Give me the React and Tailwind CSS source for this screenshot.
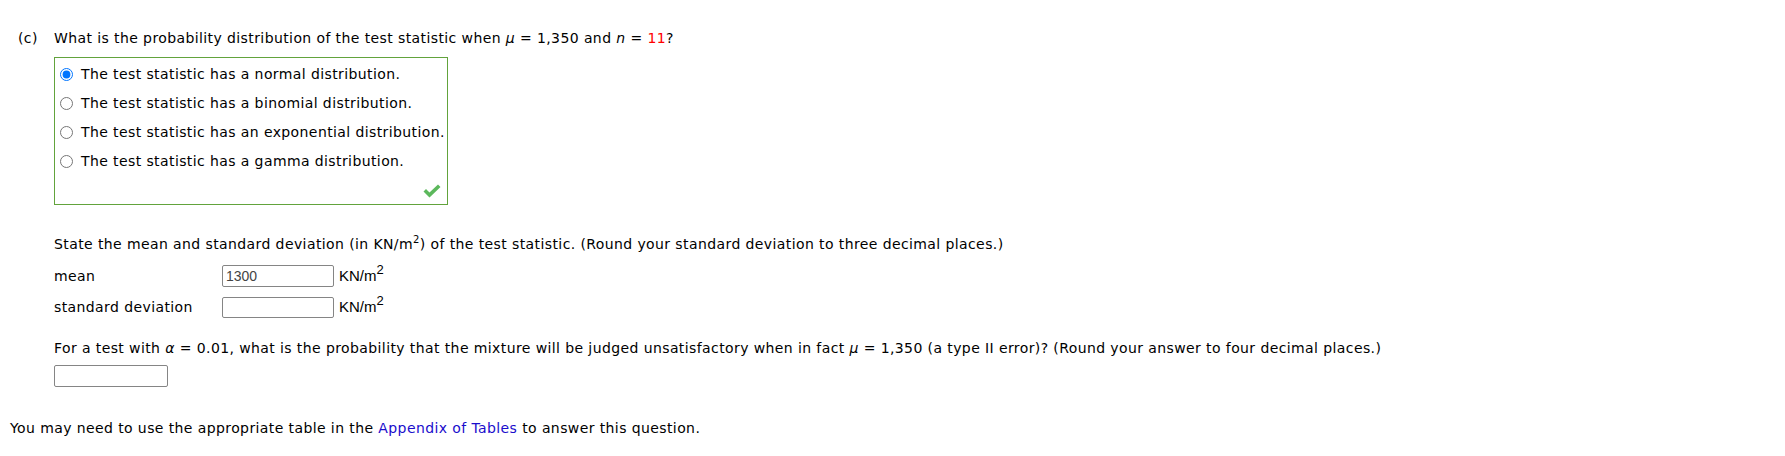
import { useState } from 'react';

const options = [
  'The test statistic has a normal distribution.',
  'The test statistic has a binomial distribution.',
  'The test statistic has an exponential distribution.',
  'The test statistic has a gamma distribution.',
];

function Unit() {
  return (
    <span className="ml-[5px] font-['Liberation_Sans',Arial,sans-serif] text-[15px] tracking-normal">
      KN/m<sup className="text-[13px] relative -top-[7px]">2</sup>
    </span>
  );
}

export default function App() {
  const [choice, setChoice] = useState(0);

  return (
    <div className="w-[1785px] h-[456px] bg-white text-[14px] tracking-[0.4px] text-black font-['DejaVu_Sans',Verdana,sans-serif]">
      <div className="pt-[29px] pl-[18px] flex leading-[18px]">
        <span className="w-[36px]">(c)</span>
        <span>
          What is the probability distribution of the test statistic when <i>μ</i> = 1,350 and <i>n</i> ={' '}
          <span className="text-[#ff0000]">11</span>?
        </span>
      </div>

      <div className="ml-[54px] mt-[10px] w-[394px] h-[148px] border border-[#62a33c] pt-[2px]">
        {options.map((opt, i) => (
          <label key={i} className="flex items-center h-[29px] pl-[5px] cursor-pointer">
            <input
              type="radio"
              name="dist"
              checked={choice === i}
              onChange={() => setChoice(i)}
              className="m-0 w-[13px] h-[13px] accent-[#0075ff]"
            />
            <span className="ml-[8px]">{opt}</span>
          </label>
        ))}
        <div className="flex justify-end pr-[6px] pt-[8px]">
          <svg width="18" height="14" viewBox="0 0 18 14">
            <path d="M0.5 7.5 L3 5 L6.5 8.5 L15 0.5 L17.5 3 L6.5 13.5 Z" fill="#5cb85c" />
          </svg>
        </div>
      </div>

      <div className="ml-[54px] mt-[30px] leading-[18px]">
        State the mean and standard deviation (in KN/m<sup className="text-[10px] relative -top-[6px]">2</sup>) of the test statistic. (Round your standard deviation to three decimal places.)
      </div>

      <div className="ml-[54px] mt-[12px] flex items-center h-[22px]">
        <span className="w-[168px]">mean</span>
        <input
          type="text"
          defaultValue="1300"
          className="w-[112px] h-[22px] border border-[#858585] rounded-[2px] px-[3px] text-[14px] tracking-normal text-[#444] font-['Liberation_Sans',Arial,sans-serif] outline-none"
        />
        <Unit />
      </div>

      <div className="ml-[54px] mt-[9px] flex items-center h-[22px]">
        <span className="w-[168px]">standard deviation</span>
        <input
          type="text"
          className="w-[112px] h-[21px] border border-[#858585] rounded-[2px] px-[3px] text-[14px] tracking-normal font-['Liberation_Sans',Arial,sans-serif] outline-none"
        />
        <Unit />
      </div>

      <div className="ml-[54px] mt-[21px] leading-[18px]">
        For a test with <i>α</i> = 0.01, what is the probability that the mixture will be judged unsatisfactory when in fact <i>μ</i> = 1,350 (a type II error)? (Round your answer to four decimal places.)
      </div>

      <div className="ml-[54px] mt-[8px]">
        <input
          type="text"
          className="w-[114px] h-[22px] border border-[#858585] rounded-[2px] px-[3px] text-[14px] font-['Liberation_Sans',Arial,sans-serif] outline-none"
        />
      </div>

      <div className="ml-[10px] mt-[32px] leading-[18px]">
        You may need to use the appropriate table in the{' '}
        <a href="#" className="text-[#1a0dcc]">Appendix of Tables</a> to answer this question.
      </div>
    </div>
  );
}
